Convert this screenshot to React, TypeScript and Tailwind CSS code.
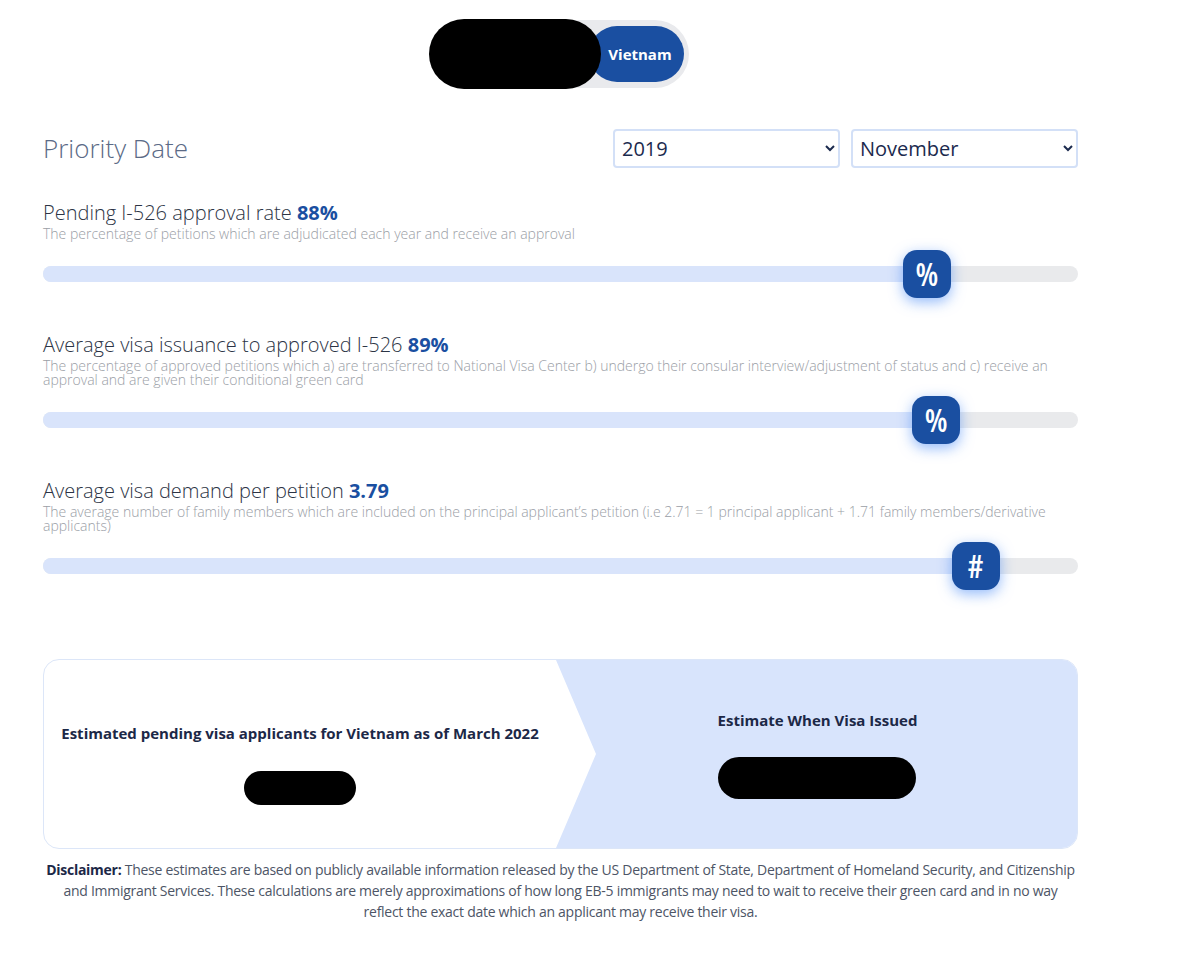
import React, { useState } from 'react';

const years = ['2016', '2017', '2018', '2019', '2020', '2021', '2022'];
const months = [
  'January', 'February', 'March', 'April', 'May', 'June',
  'July', 'August', 'September', 'October', 'November', 'December',
];

interface SliderRowProps {
  label: string;
  value: string;
  description: string;
  pct: number;
  symbol: string;
}

const SliderRow: React.FC<SliderRowProps> = ({ label, value, description, pct, symbol }) => {
  return (
    <div>
      <div className="text-[20px] leading-6 font-light text-[#2c3445]">
        {label} <span className="font-bold text-[#1a4fa1]">{value}</span>
      </div>
      <p className="mt-[2px] text-[14px] leading-[14px] font-light text-[#9a9ea6]">{description}</p>
      <div className="relative mt-[25px] h-4 rounded-full bg-[#e9eaec]">
        <div className="h-4 rounded-full bg-[#d9e4fb]" style={{ width: `${pct}%` }} />
        <div
          className="absolute top-1/2 flex h-12 w-12 -translate-x-1/2 -translate-y-1/2 items-center justify-center rounded-[14px] bg-[#1a4fa1] text-[32px] font-semibold text-white shadow-[0_4px_14px_rgba(59,130,246,0.55)] [font-stretch:85%]"
          style={{ left: `${pct}%` }}
        >
          {symbol}
        </div>
      </div>
    </div>
  );
};

const App: React.FC = () => {
  const [year, setYear] = useState('2019');
  const [month, setMonth] = useState('November');

  return (
    <div className="min-h-[966px] bg-white font-['Open_Sans',sans-serif]">
      <div className="ml-[43px] w-[1035px] pt-5">
        {/* country toggle */}
        <div className="flex justify-center">
          <div className="-ml-[4px] flex h-[68px] items-center rounded-full bg-[#e9eaed] pr-[5px]">
            <div className="relative z-10 -mr-3 h-[70px] w-[172px] rounded-[40px] bg-black" />
            <button className="h-[56px] w-[95px] rounded-full bg-[#1a4fa1] pl-2 text-[15px] font-bold text-white">
              Vietnam
            </button>
          </div>
        </div>

        {/* priority date */}
        <div className="mt-[41px] flex items-center justify-between">
          <h2 className="text-[26px] font-light text-[#5b6a86]">Priority Date</h2>
          <div className="flex gap-[11px]">
            <select
              value={year}
              onChange={(e) => setYear(e.target.value)}
              className="h-[39px] w-[227px] rounded-[4px] border-2 border-[#d3e0f7] bg-white px-[3px] text-[20px] text-[#1b2a4e]"
            >
              {years.map((y) => (
                <option key={y}>{y}</option>
              ))}
            </select>
            <select
              value={month}
              onChange={(e) => setMonth(e.target.value)}
              className="h-[39px] w-[227px] rounded-[4px] border-2 border-[#d3e0f7] bg-white px-[3px] text-[20px] text-[#1b2a4e]"
            >
              {months.map((m) => (
                <option key={m}>{m}</option>
              ))}
            </select>
          </div>
        </div>

        {/* sliders */}
        <div className="mt-[33px] flex flex-col gap-[51px]">
          <SliderRow
            label="Pending I-526 approval rate"
            value="88%"
            description="The percentage of petitions which are adjudicated each year and receive an approval"
            pct={85.4}
            symbol="%"
          />
          <SliderRow
            label="Average visa issuance to approved I-526"
            value="89%"
            description="The percentage of approved petitions which a) are transferred to National Visa Center b) undergo their consular interview/adjustment of status and c) receive an approval and are given their conditional green card"
            pct={86.3}
            symbol="%"
          />
          <SliderRow
            label="Average visa demand per petition"
            value="3.79"
            description="The average number of family members which are included on the principal applicant’s petition (i.e 2.71 = 1 principal applicant + 1.71 family members/derivative applicants)"
            pct={90.1}
            symbol="#"
          />
        </div>

        {/* result card */}
        <div className="mt-[85px] flex h-[190px] overflow-hidden rounded-[16px] border border-[#dce6f8]">
          <div className="flex w-[512px] flex-col items-center justify-center gap-[27px] pt-[19px]">
            <div className="text-[15px] font-bold text-[#1c2847]">
              Estimated pending visa applicants for Vietnam as of March 2022
            </div>
            <div className="h-[34px] w-[112px] rounded-full bg-black" />
          </div>
          <div className="flex flex-1 flex-col items-center justify-center gap-[26px] bg-[#d8e4fc] [clip-path:polygon(0_0,100%_0,100%_100%,0_100%,40px_50%)]">
            <div className="pl-[2px] text-[15px] font-bold text-[#1c2847]">Estimate When Visa Issued</div>
            <div className="h-[42px] w-[198px] rounded-full bg-black" />
          </div>
        </div>

        {/* disclaimer */}
        <p className="mt-[10px] text-center text-[14px] leading-[21px] tracking-[-0.27px] text-[#4d5566]">
          <span className="font-bold text-[#1c2847]">Disclaimer:</span>{' '}
          These estimates are based on publicly available information released by the US Department of State,
          Department of Homeland Security, and Citizenship and Immigrant Services. These calculations are merely
          approximations of how long EB-5 immigrants may need to wait to receive their green card and in no way
          reflect the exact date which an applicant may receive their visa.
        </p>
      </div>
    </div>
  );
};

export default App;
